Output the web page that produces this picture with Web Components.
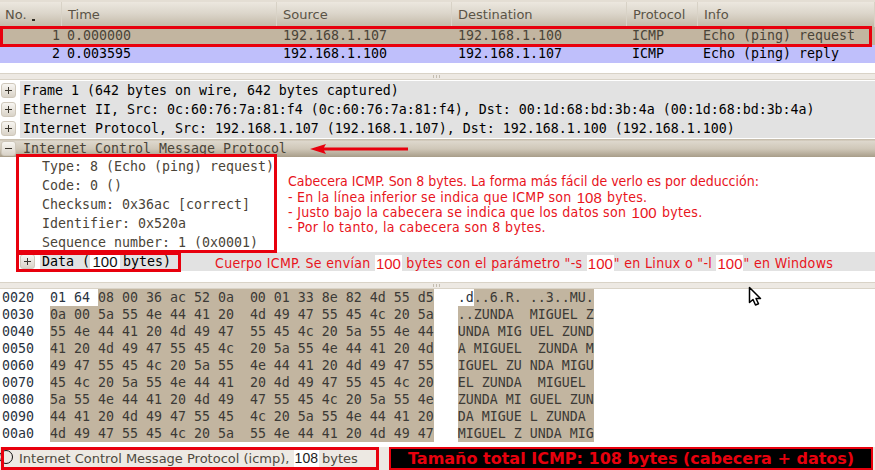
<!DOCTYPE html>
<html>
<head>
<meta charset="utf-8">
<title>ICMP</title>
<style>
  html, body { margin: 0; padding: 0; background: #fff; }
  body { width: 875px; height: 470px; overflow: hidden; position: relative; }
</style>
</head>
<body>
<capture-window>
  <packet-list>
    <packet-row selected no="1" time="0.000000" src="192.168.1.107" dst="192.168.1.100" proto="ICMP" info="Echo (ping) request"></packet-row>
    <packet-row no="2" time="0.003595" src="192.168.1.100" dst="192.168.1.107" proto="ICMP" info="Echo (ping) reply"></packet-row>
  </packet-list>
  <pane-handle></pane-handle>
  <proto-tree></proto-tree>
  <pane-handle></pane-handle>
  <hex-view></hex-view>
  <status-bar></status-bar>
  <red-notes></red-notes>
</capture-window>

<script>
const MONO = '"DejaVu Sans Mono", monospace';
const SANS = '"DejaVu Sans", sans-serif';
const MONO_SIZE = "13.29px";

class CaptureWindow extends HTMLElement {
  constructor() {
    super();
    this.attachShadow({ mode: "open" }).innerHTML = `
      <style>
        :host {
          display: flex;
          flex-direction: column;
          position: relative;
          width: 875px;
          height: 470px;
          overflow: hidden;
          background: #fff;
        }
        ::slotted(*) { flex: none; }
      </style>
      <slot></slot>
    `;
  }
}

class PacketList extends HTMLElement {
  constructor() {
    super();
    this.attachShadow({ mode: "open" }).innerHTML = `
      <style>
        :host { display: block; height: 73px; background: #fff; }
        .top { height: 2px; background: #e4ded4; }
        .head {
          display: grid;
          grid-template-columns: 62px 215px 175px 175px 71px 1fr;
          height: 25px;
          background: linear-gradient(#ece7df, #dcd6cb 45%, #c2b8a6);
          font: 13px ${SANS};
          color: #5a5346;
        }
        .head div {
          padding: 5px 0 0 5px;
          border-right: 1px solid #d8d2c6;
          box-sizing: border-box;
          position: relative;
        }
        .head div + div { padding-left: 6px; }
        .sort {
          position: absolute;
          left: 32px;
          top: 17px;
          width: 3px;
          height: 2px;
          background: #2e2a22;
        }
      </style>
      <div class="top"></div>
      <div class="head">
        <div>No.<span class="sort"></span></div><div>Time</div><div>Source</div><div>Destination</div><div>Protocol</div><div>Info</div>
      </div>
      <slot></slot>
    `;
  }
}

class PacketRow extends HTMLElement {
  constructor() {
    super();
    this.attachShadow({ mode: "open" });
  }
  connectedCallback() {
    const a = (n) => this.getAttribute(n);
    this.shadowRoot.innerHTML = `
      <style>
        :host {
          display: grid;
          grid-template-columns: 62px 215px 175px 175px 71px 1fr;
          height: 18px;
          font: ${MONO_SIZE}/18px ${MONO};
          color: #000;
          background: #bfbffb;
        }
        :host([selected]) { background: #c2b5a0; color: #4a4438; }
        .no { text-align: right; padding-right: 2px; }
        .time { padding-left: 5px; }
        .cell { padding-left: 6px; }
        .proto { padding-left: 5px; }
        .info { padding-left: 5px; white-space: pre; }
      </style>
      <div class="no">${a("no")}</div>
      <div class="time">${a("time")}</div>
      <div class="cell">${a("src")}</div>
      <div class="cell">${a("dst")}</div>
      <div class="proto">${a("proto")}</div>
      <div class="info">${a("info")}</div>
    `;
  }
}

class PaneHandle extends HTMLElement {
  constructor() {
    super();
    this.attachShadow({ mode: "open" }).innerHTML = `
      <style>
        :host {
          display: flex;
          justify-content: center;
          align-items: center;
          height: 7px;
          background: #ede9e3;
          border-top: 1px solid #d9d3c7;
          border-bottom: 1px solid #d9d3c7;
          box-sizing: border-box;
        }
        i { width: 1px; height: 3px; background: #c4bdb0; margin-right: 2px; }
      </style>
      <i></i><i></i><i></i>
    `;
  }
}

class TreeExpander extends HTMLElement {
  constructor() {
    super();
    this.attachShadow({ mode: "open" }).innerHTML = `
      <style>
        :host {
          display: block;
          position: relative;
          width: 15px;
          height: 15px;
          box-sizing: border-box;
          border-radius: 3px;
          border: 1px solid #cfc8bb;
          background: linear-gradient(#f8f6f2, #d9d3c8);
        }
        i { position: absolute; background: #3a362e; }
        .h { left: 3px; right: 3px; top: 6px; height: 1px; }
        .v { top: 3px; bottom: 3px; left: 6px; width: 1px; }
        :host([open]) .v { display: none; }
      </style>
      <i class="h"></i><i class="v"></i>
    `;
  }
}

class TreeRow extends HTMLElement {
  constructor() {
    super();
    this.attachShadow({ mode: "open" }).innerHTML = `
      <style>
        :host {
          display: flex;
          align-items: center;
          height: 19px;
          font: ${MONO_SIZE}/19px ${MONO};
          color: #000;
          background: #fff;
        }
        .gut { width: 20px; height: 19px; padding-left: 1px; box-sizing: border-box; display: flex; align-items: center; flex: none; }
        .text { flex: 1; height: 19px; padding-left: 3px; background: #e2e2e2; white-space: pre; }
        :host([selected]) {
          background: linear-gradient(#c2b8a6, #ddd7cc 14%, #cfc7b8 55%, #a89d89);
          color: #4a4438;
        }
        :host([selected]) .gut, :host([selected]) .text { background: none; }
        :host([leaf]) .gut { display: none; }
        :host([leaf]) { padding-left: 39px; color: #4a4438; }
        :host([leaf]) .text { background: #fff; padding-left: 3px; }
      </style>
      <div class="gut"><slot name="exp"></slot></div>
      <div class="text"><slot></slot></div>
    `;
  }
}

class ProtoTree extends HTMLElement {
  constructor() {
    super();
    this.attachShadow({ mode: "open" }).innerHTML = `
      <style>
        :host { display: block; height: 202px; padding-top: 1px; box-sizing: border-box; background: #fff; }
        .sel { margin-top: 1px; height: 18px; }
        .data { display: flex; align-items: center; height: 19px; font: ${MONO_SIZE}/19px ${MONO}; }
        .data tree-expander { margin: 0 5px 0 20px; flex: none; }
        .band { flex: 1; display: flex; height: 19px; background: #e2e2e2; padding-left: 2px; white-space: pre; }
        .n { display: inline-block; background: #fff; width: 30px; text-align: center; font: 15px/19px "Liberation Sans", sans-serif; color: #111; margin-right: 3px; }
      </style>
      <tree-row><tree-expander slot="exp"></tree-expander>Frame 1 (642 bytes on wire, 642 bytes captured)</tree-row>
      <tree-row><tree-expander slot="exp"></tree-expander>Ethernet II, Src: 0c:60:76:7a:81:f4 (0c:60:76:7a:81:f4), Dst: 00:1d:68:bd:3b:4a (00:1d:68:bd:3b:4a)</tree-row>
      <tree-row><tree-expander slot="exp"></tree-expander>Internet Protocol, Src: 192.168.1.107 (192.168.1.107), Dst: 192.168.1.100 (192.168.1.100)</tree-row>
      <tree-row class="sel" selected><tree-expander slot="exp" open></tree-expander>Internet Control Message Protocol</tree-row>
      <div>
        <tree-row leaf>Type: 8 (Echo (ping) request)</tree-row>
        <tree-row leaf>Code: 0 ()</tree-row>
        <tree-row leaf>Checksum: 0x36ac [correct]</tree-row>
        <tree-row leaf>Identifier: 0x520a</tree-row>
        <tree-row leaf>Sequence number: 1 (0x0001)</tree-row>
      </div>
      <div class="data">
        <tree-expander></tree-expander>
        <div class="band">Data (<span class="n">100</span>bytes)</div>
      </div>
    `;
  }
}

const HEX = [
  ["0020", "01 64 08 00 36 ac 52 0a  00 01 33 8e 82 4d 55 d5", ".d..6.R. ..3..MU."],
  ["0030", "0a 00 5a 55 4e 44 41 20  4d 49 47 55 45 4c 20 5a", "..ZUNDA  MIGUEL Z"],
  ["0040", "55 4e 44 41 20 4d 49 47  55 45 4c 20 5a 55 4e 44", "UNDA MIG UEL ZUND"],
  ["0050", "41 20 4d 49 47 55 45 4c  20 5a 55 4e 44 41 20 4d", "A MIGUEL  ZUNDA M"],
  ["0060", "49 47 55 45 4c 20 5a 55  4e 44 41 20 4d 49 47 55", "IGUEL ZU NDA MIGU"],
  ["0070", "45 4c 20 5a 55 4e 44 41  20 4d 49 47 55 45 4c 20", "EL ZUNDA  MIGUEL "],
  ["0080", "5a 55 4e 44 41 20 4d 49  47 55 45 4c 20 5a 55 4e", "ZUNDA MI GUEL ZUN"],
  ["0090", "44 41 20 4d 49 47 55 45  4c 20 5a 55 4e 44 41 20", "DA MIGUE L ZUNDA "],
  ["00a0", "4d 49 47 55 45 4c 20 5a  55 4e 44 41 20 4d 49 47", "MIGUEL Z UNDA MIG"],
];

class HexView extends HTMLElement {
  constructor() {
    super();
    const lines = HEX.map(([off, hex, txt], i) => {
      const h = i === 0
        ? `${hex.slice(0, 6)}<b>${hex.slice(6)}</b>`
        : `<b>${hex}</b>`;
      const t = i === 0
        ? `${txt.slice(0, 2)}<b>${txt.slice(2)}</b>`
        : `<b>${txt}</b>`;
      return `<div>${off}  ${h}   ${t}</div>`;
    }).join("");
    this.attachShadow({ mode: "open" }).innerHTML = `
      <style>
        :host {
          display: block;
          height: 158px;
          padding: 0 0 0 2px;
          box-sizing: border-box;
          background: #fff;
          font: ${MONO_SIZE}/17px ${MONO};
          color: #2a3340;
        }
        div { height: 17px; white-space: pre; }
        b { display: inline-block; height: 17px; font-weight: normal; background: #c2b5a0; color: #3c3a36; }
      </style>
      ${lines}
    `;
  }
}

class StatusBar extends HTMLElement {
  constructor() {
    super();
    this.attachShadow({ mode: "open" }).innerHTML = `
      <style>
        :host {
          display: flex;
          height: 23px;
          background: #ede9e3;
          font: 13px/21px ${SANS};
          color: #4f4a40;
          align-items: stretch;
        }
        .left { width: 378px; display: flex; padding-top: 1px; box-sizing: border-box; white-space: pre; }
        .dot {
          width: 14px; height: 14px; margin: 2px 6px 0 -1px; box-sizing: border-box;
          border: 1px solid #111; border-radius: 50%; flex: none;
        }
        .n { background: #fff; font: 14px/19px "Liberation Sans", sans-serif; color: #222; height: 19px; margin: 1px 3px 0 0; padding: 0 1px; }
        .grip { width: 11px; }
        .total {
          width: 484px;
          box-sizing: border-box;
          border: 2px solid #e8000d;
          background: #000;
          color: #e8000d;
          font: bold 16px/19px ${SANS};
          padding-left: 17px;
          white-space: pre;
        }
      </style>
      <div class="left"><span class="dot"></span>Internet Control Message Protocol (icmp), <span class="n">108</span>bytes</div>
      <div class="grip"></div>
      <div class="total">Tamaño total ICMP: 108 bytes (cabecera + datos)</div>
    `;
  }
}

// lo que el autor pinto encima de la captura: recuadros, flecha y notas
class RedNotes extends HTMLElement {
  constructor() {
    super();
    this.attachShadow({ mode: "open" }).innerHTML = `
      <style>
        :host { position: absolute; left: 0; top: 0; width: 875px; height: 470px; pointer-events: none; }
        .box { position: absolute; box-sizing: border-box; border: 3px solid #e8000d; }
        .note {
          position: absolute;
          display: flex;
          flex-direction: column;
          color: #e8141c;
          font: 14px/15px "DejaVu Sans Condensed", "DejaVu Sans", sans-serif;
          font-stretch: condensed;
        }
        .note div { white-space: pre; height: 15px; }
        .n { font: 15px/15px "Liberation Sans", sans-serif; background: #fff; padding: 0 1px; letter-spacing: 0; vertical-align: -1px; }
        svg { position: absolute; left: 305px; top: 142px; }
        .cursor { left: 748px; top: 286px; }
      </style>
      <div class="box" style="left:0;top:26px;width:872px;height:21px"></div>
      <div class="box" style="left:16px;top:154px;width:261px;height:99px"></div>
      <div class="box" style="left:16px;top:252px;width:165px;height:20px"></div>
      <div class="box" style="left:1px;top:447px;width:378px;height:23px"></div>
      <svg width="108" height="14" viewBox="0 0 108 14">
        <path d="M5 7 L21 2 L19 5.5 L103 5.5 L103 8.5 L19 8.5 L21 12 Z" fill="#e8000d"/>
      </svg>
      <div class="note" style="left:288px;top:174px">
        <div style="margin-bottom:1px">Cabecera ICMP. Son 8 bytes. La forma más fácil de verlo es por deducción:</div>
        <div style="letter-spacing:.25px">- En la línea inferior se indica que ICMP son <span class="n">108</span> bytes.</div>
        <div style="letter-spacing:.31px">- Justo bajo la cabecera se indica que los datos son <span class="n">100</span> bytes.</div>
        <div style="letter-spacing:.37px">- Por lo tanto, la cabecera son 8 bytes.</div>
      </div>
      <div class="note" style="left:215px;top:256px">
        <div style="letter-spacing:.33px">Cuerpo ICMP. Se envían <span class="n">100</span> bytes con el parámetro "-s <span class="n">100</span>" en Linux o "-l <span class="n">100</span>" en Windows</div>
      </div>
      <svg class="cursor" width="16" height="21" viewBox="0 0 16 21">
        <path d="M1.5 1.5 L1.5 16.5 L5 13.5 L7.5 19 L10.5 17.8 L8 12.5 L12.5 12.5 Z" fill="#fff" stroke="#000" stroke-width="1.5" stroke-linejoin="round"/>
      </svg>
    `;
  }
}

customElements.define("capture-window", CaptureWindow);
customElements.define("packet-list", PacketList);
customElements.define("packet-row", PacketRow);
customElements.define("pane-handle", PaneHandle);
customElements.define("tree-expander", TreeExpander);
customElements.define("tree-row", TreeRow);
customElements.define("proto-tree", ProtoTree);
customElements.define("hex-view", HexView);
customElements.define("status-bar", StatusBar);
customElements.define("red-notes", RedNotes);
</script>
</body>
</html>
